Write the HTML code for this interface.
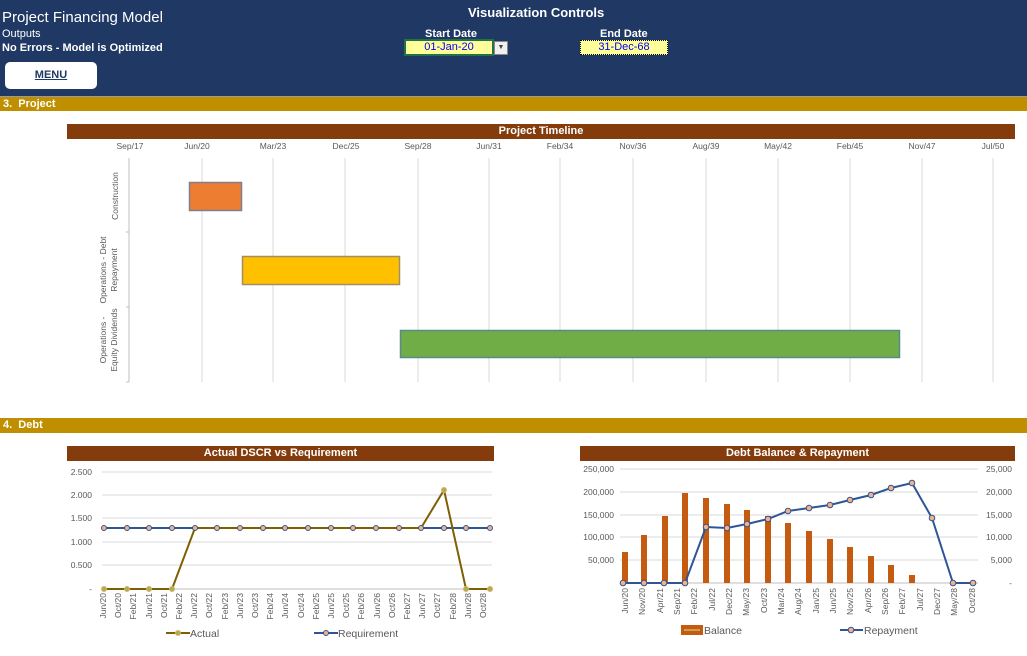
<!DOCTYPE html>
<html><head><meta charset="utf-8"><style>
*{margin:0;padding:0;box-sizing:border-box}
body{width:1027px;height:656px;overflow:hidden;background:#fff;font-family:"Liberation Sans",sans-serif;position:relative}
.a{position:absolute;white-space:nowrap}
</style></head><body>
<div class="a" style="left:0;top:0;width:1027px;height:96px;background:#203864"></div>
<div class="a" style="left:2px;top:9px;color:#fff;font-size:15px;">Project Financing Model</div>
<div class="a" style="left:2px;top:28px;color:#fff;font-size:11px;">Outputs</div>
<div class="a" style="left:2px;top:42px;color:#fff;font-size:11px;font-weight:bold">No Errors - Model is Optimized</div>
<div class="a" style="left:5px;top:62px;width:92px;height:27px;background:#fff;border-radius:5px;text-align:center;line-height:27px;font-size:11px;font-weight:bold;color:#203864;text-decoration:underline">MENU</div>
<div class="a" style="left:468px;top:5px;color:#fff;font-size:13px;font-weight:bold">Visualization Controls</div>
<div class="a" style="left:425px;top:28px;color:#fff;font-size:11px;font-weight:bold">Start Date</div>
<div class="a" style="left:600px;top:28px;color:#fff;font-size:11px;font-weight:bold">End Date</div>
<div class="a" style="left:404px;top:39px;width:90px;height:17px;background:#ffff99;border:2px solid #217346;color:#0000ff;font-size:11px;text-align:center;line-height:13px">01-Jan-20</div>
<div class="a" style="left:494px;top:41px;width:14px;height:14px;background:#f0f0f0;border:1px solid #888;font-size:7px;text-align:center;line-height:12px;color:#444">▼</div>
<div class="a" style="left:580px;top:40px;width:88px;height:15px;background:#ffff99;border:1px dotted #000;color:#0000ff;font-size:11px;text-align:center;line-height:13px">31-Dec-68</div>
<div class="a" style="left:0;top:96px;width:1027px;height:15px;background:#bf8f00;color:#fff;font-size:11px;font-weight:bold;line-height:15px;padding-left:3px;border-top:1px solid #9a9a9a">3.&nbsp; Project</div>
<div class="a" style="left:0;top:418px;width:1027px;height:15px;background:#bf8f00;color:#fff;font-size:11px;font-weight:bold;line-height:15px;padding-left:3px">4.&nbsp; Debt</div>
<div class="a" style="left:67px;top:124px;width:948px;height:15px;background:#843c0c;color:#fff;font-size:11px;font-weight:bold;text-align:center;line-height:15px">Project Timeline</div>
<div class="a" style="left:67px;top:446px;width:427px;height:15px;background:#843c0c;color:#fff;font-size:11px;font-weight:bold;text-align:center;line-height:15px">Actual DSCR vs Requirement</div>
<div class="a" style="left:580px;top:446px;width:435px;height:15px;background:#843c0c;color:#fff;font-size:11px;font-weight:bold;text-align:center;line-height:15px">Debt Balance &amp; Repayment</div>
<svg class="a" style="left:0;top:0" width="1027" height="656" font-family="Liberation Sans, sans-serif" font-size="8.5" fill="#595959">
<g stroke="#d9d9d9" stroke-width="1">
<line x1="202" y1="158" x2="202" y2="382"/><line x1="273" y1="158" x2="273" y2="382"/><line x1="345" y1="158" x2="345" y2="382"/><line x1="418" y1="158" x2="418" y2="382"/><line x1="489" y1="158" x2="489" y2="382"/><line x1="560" y1="158" x2="560" y2="382"/><line x1="633" y1="158" x2="633" y2="382"/><line x1="706" y1="158" x2="706" y2="382"/><line x1="778" y1="158" x2="778" y2="382"/><line x1="850" y1="158" x2="850" y2="382"/><line x1="922" y1="158" x2="922" y2="382"/><line x1="993" y1="158" x2="993" y2="382"/>
</g>
<line x1="129" y1="158" x2="129" y2="382" stroke="#bfbfbf"/>
<g stroke="#bfbfbf"><line x1="126" y1="232" x2="129" y2="232"/><line x1="126" y1="307" x2="129" y2="307"/><line x1="126" y1="382" x2="129" y2="382"/></g>
<g text-anchor="middle">
<text x="130" y="149">Sep/17</text><text x="197" y="149">Jun/20</text><text x="273" y="149">Mar/23</text><text x="346" y="149">Dec/25</text><text x="418" y="149">Sep/28</text><text x="489" y="149">Jun/31</text><text x="560" y="149">Feb/34</text><text x="633" y="149">Nov/36</text><text x="706" y="149">Aug/39</text><text x="778" y="149">May/42</text><text x="850" y="149">Feb/45</text><text x="922" y="149">Nov/47</text><text x="993" y="149">Jul/50</text>
</g>
<g text-anchor="middle" font-size="8.5">
<text transform="translate(118,196) rotate(-90)">Construction</text>
<text transform="translate(106,270) rotate(-90)">Operations - Debt</text>
<text transform="translate(117,270) rotate(-90)">Repayment</text>
<text transform="translate(106,340) rotate(-90)">Operations -</text>
<text transform="translate(117,340) rotate(-90)">Equity Dividends</text>
</g>
<rect x="189.5" y="182.5" width="52" height="28" fill="#ed7d31" stroke="#7f7f8f" stroke-width="1.5"/>
<rect x="242.5" y="256.5" width="157" height="28" fill="#ffc000" stroke="#a09060" stroke-width="1.5"/>
<rect x="400.5" y="330.5" width="499" height="27" fill="#70ad47" stroke="#5a8a8a" stroke-width="1.5"/>

<!-- DSCR -->
<g stroke="#d9d9d9"><line x1="102" y1="472" x2="492" y2="472"/><line x1="102" y1="495" x2="492" y2="495"/><line x1="102" y1="518" x2="492" y2="518"/><line x1="102" y1="542" x2="492" y2="542"/><line x1="102" y1="565" x2="492" y2="565"/></g>
<line x1="102" y1="589" x2="492" y2="589" stroke="#bfbfbf"/>
<g text-anchor="end"><text x="92" y="475">2.500</text><text x="92" y="498">2.000</text><text x="92" y="521">1.500</text><text x="92" y="545">1.000</text><text x="92" y="568">0.500</text><text x="92" y="592">-</text></g>
<polyline fill="none" stroke="#2f5597" stroke-width="2" points="104,528 490,528"/>
<polyline fill="none" stroke="#7f6000" stroke-width="2" points="104,589 127,589 149,589 172,589 195,528 421,528 444,490 466,589 490,589"/>
<g fill="#f4b183" stroke="#2f5597" stroke-width="1">
<circle cx="104" cy="528" r="2.5"/><circle cx="127" cy="528" r="2.5"/><circle cx="149" cy="528" r="2.5"/><circle cx="172" cy="528" r="2.5"/><circle cx="195" cy="528" r="2.5"/><circle cx="217" cy="528" r="2.5"/><circle cx="240" cy="528" r="2.5"/><circle cx="263" cy="528" r="2.5"/><circle cx="285" cy="528" r="2.5"/><circle cx="308" cy="528" r="2.5"/><circle cx="331" cy="528" r="2.5"/><circle cx="353" cy="528" r="2.5"/><circle cx="376" cy="528" r="2.5"/><circle cx="399" cy="528" r="2.5"/><circle cx="421" cy="528" r="2.5"/><circle cx="444" cy="528" r="2.5"/><circle cx="466" cy="528" r="2.5"/><circle cx="490" cy="528" r="2.5"/>
</g>
<g fill="#8fbc5a" stroke="#f4a460" stroke-width="1">
<circle cx="104" cy="589" r="2.5"/><circle cx="127" cy="589" r="2.5"/><circle cx="149" cy="589" r="2.5"/><circle cx="172" cy="589" r="2.5"/><circle cx="444" cy="490" r="2.5"/><circle cx="466" cy="589" r="2.5"/><circle cx="490" cy="589" r="2.5"/>
</g>
<g font-size="8.5" text-anchor="end">
<text transform="translate(106,593) rotate(-90)">Jun/20</text><text transform="translate(121,593) rotate(-90)">Oct/20</text><text transform="translate(136,593) rotate(-90)">Feb/21</text><text transform="translate(152,593) rotate(-90)">Jun/21</text><text transform="translate(167,593) rotate(-90)">Oct/21</text><text transform="translate(182,593) rotate(-90)">Feb/22</text><text transform="translate(197,593) rotate(-90)">Jun/22</text><text transform="translate(212,593) rotate(-90)">Oct/22</text><text transform="translate(228,593) rotate(-90)">Feb/23</text><text transform="translate(243,593) rotate(-90)">Jun/23</text><text transform="translate(258,593) rotate(-90)">Oct/23</text><text transform="translate(273,593) rotate(-90)">Feb/24</text><text transform="translate(288,593) rotate(-90)">Jun/24</text><text transform="translate(304,593) rotate(-90)">Oct/24</text><text transform="translate(319,593) rotate(-90)">Feb/25</text><text transform="translate(334,593) rotate(-90)">Jun/25</text><text transform="translate(349,593) rotate(-90)">Oct/25</text><text transform="translate(364,593) rotate(-90)">Feb/26</text><text transform="translate(380,593) rotate(-90)">Jun/26</text><text transform="translate(395,593) rotate(-90)">Oct/26</text><text transform="translate(410,593) rotate(-90)">Feb/27</text><text transform="translate(425,593) rotate(-90)">Jun/27</text><text transform="translate(440,593) rotate(-90)">Oct/27</text><text transform="translate(456,593) rotate(-90)">Feb/28</text><text transform="translate(471,593) rotate(-90)">Jun/28</text><text transform="translate(486,593) rotate(-90)">Oct/28</text>
</g>
<line x1="166" y1="633" x2="190" y2="633" stroke="#7f6000" stroke-width="2"/><circle cx="178" cy="633" r="2.5" fill="#8fbc5a" stroke="#f4a460"/>
<text x="190" y="637" font-size="10.5">Actual</text>
<line x1="314" y1="633" x2="338" y2="633" stroke="#2f5597" stroke-width="2"/><circle cx="326" cy="633" r="2.5" fill="#f4b183" stroke="#2f5597"/>
<text x="338" y="637" font-size="10.5">Requirement</text>

<!-- Debt -->
<g stroke="#d9d9d9"><line x1="620" y1="469" x2="978" y2="469"/><line x1="620" y1="492" x2="978" y2="492"/><line x1="620" y1="515" x2="978" y2="515"/><line x1="620" y1="537" x2="978" y2="537"/><line x1="620" y1="560" x2="978" y2="560"/></g>
<line x1="620" y1="583" x2="978" y2="583" stroke="#bfbfbf"/>
<g text-anchor="end"><text x="614" y="472">250,000</text><text x="614" y="495">200,000</text><text x="614" y="518">150,000</text><text x="614" y="540">100,000</text><text x="614" y="563">50,000</text></g>
<g text-anchor="end"><text x="1012" y="472">25,000</text><text x="1012" y="495">20,000</text><text x="1012" y="518">15,000</text><text x="1012" y="540">10,000</text><text x="1012" y="563">5,000</text><text x="1012" y="586">-</text></g>
<g fill="#c55a11">
<rect x="622" y="552" width="6" height="31"/><rect x="641" y="535" width="6" height="48"/><rect x="662" y="516" width="6" height="67"/><rect x="682" y="493" width="6" height="90"/><rect x="703" y="498" width="6" height="85"/><rect x="724" y="504" width="6" height="79"/><rect x="744" y="510" width="6" height="73"/><rect x="765" y="516" width="6" height="67"/><rect x="785" y="523" width="6" height="60"/><rect x="806" y="531" width="6" height="52"/><rect x="827" y="539" width="6" height="44"/><rect x="847" y="547" width="6" height="36"/><rect x="868" y="556" width="6" height="27"/><rect x="888" y="565" width="6" height="18"/><rect x="909" y="575" width="6" height="8"/>
</g>
<polyline fill="none" stroke="#2f5597" stroke-width="2" points="623,583 644,583 664,583 685,583 706,527 727,528 747,524 768,519 788,511 809,508 830,505 850,500 871,495 891,488 912,483 932,518 953,583 973,583"/>
<g fill="#f4b183" stroke="#2f5597" stroke-width="1">
<circle cx="623" cy="583" r="2.8"/><circle cx="644" cy="583" r="2.8"/><circle cx="664" cy="583" r="2.8"/><circle cx="685" cy="583" r="2.8"/><circle cx="706" cy="527" r="2.8"/><circle cx="727" cy="528" r="2.8"/><circle cx="747" cy="524" r="2.8"/><circle cx="768" cy="519" r="2.8"/><circle cx="788" cy="511" r="2.8"/><circle cx="809" cy="508" r="2.8"/><circle cx="830" cy="505" r="2.8"/><circle cx="850" cy="500" r="2.8"/><circle cx="871" cy="495" r="2.8"/><circle cx="891" cy="488" r="2.8"/><circle cx="912" cy="483" r="2.8"/><circle cx="932" cy="518" r="2.8"/><circle cx="953" cy="583" r="2.8"/><circle cx="973" cy="583" r="2.8"/>
</g>
<g font-size="8.5" text-anchor="end">
<text transform="translate(628,588) rotate(-90)">Jun/20</text><text transform="translate(645,588) rotate(-90)">Nov/20</text><text transform="translate(663,588) rotate(-90)">Apr/21</text><text transform="translate(680,588) rotate(-90)">Sep/21</text><text transform="translate(697,588) rotate(-90)">Feb/22</text><text transform="translate(715,588) rotate(-90)">Jul/22</text><text transform="translate(732,588) rotate(-90)">Dec/22</text><text transform="translate(749,588) rotate(-90)">May/23</text><text transform="translate(767,588) rotate(-90)">Oct/23</text><text transform="translate(784,588) rotate(-90)">Mar/24</text><text transform="translate(801,588) rotate(-90)">Aug/24</text><text transform="translate(819,588) rotate(-90)">Jan/25</text><text transform="translate(836,588) rotate(-90)">Jun/25</text><text transform="translate(853,588) rotate(-90)">Nov/25</text><text transform="translate(871,588) rotate(-90)">Apr/26</text><text transform="translate(888,588) rotate(-90)">Sep/26</text><text transform="translate(905,588) rotate(-90)">Feb/27</text><text transform="translate(923,588) rotate(-90)">Jul/27</text><text transform="translate(940,588) rotate(-90)">Dec/27</text><text transform="translate(957,588) rotate(-90)">May/28</text><text transform="translate(975,588) rotate(-90)">Oct/28</text>
</g>
<rect x="681" y="625" width="22" height="10" fill="#c55a11"/><line x1="684" y1="630" x2="700" y2="630" stroke="#c9a050" stroke-width="2"/>
<text x="704" y="634" font-size="10.5">Balance</text>
<line x1="840" y1="630" x2="863" y2="630" stroke="#2f5597" stroke-width="2"/><circle cx="851" cy="630" r="2.8" fill="#f4b183" stroke="#2f5597"/>
<text x="864" y="634" font-size="10.5">Repayment</text>
</svg>
</body></html>
